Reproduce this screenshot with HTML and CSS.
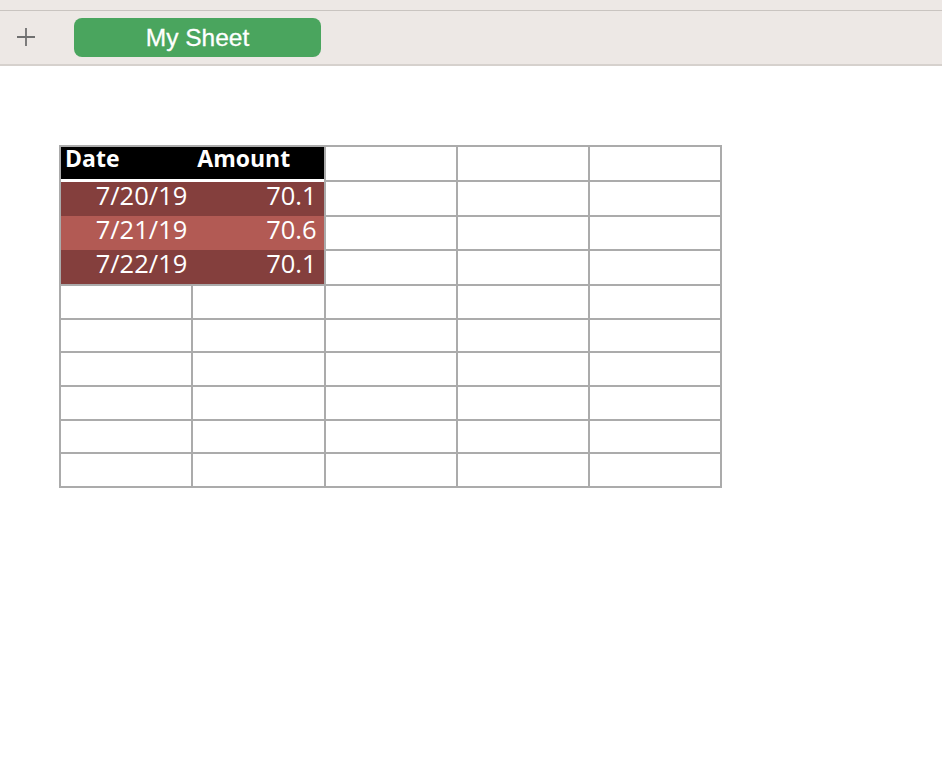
FILE: index.html
```html
<!DOCTYPE html>
<html>
<head>
<meta charset="utf-8">
<link rel="stylesheet" href="styles.css">
</head>
<body>
<div class="topstrip"></div>
<div class="tabbar">
  <button class="add" aria-label="Add sheet">
    <svg width="20" height="20" viewBox="0 0 20 20"><path d="M10 1V19M1 10H19" stroke="#707070" stroke-width="1.8" fill="none"/></svg>
  </button>
  <div class="tab">My Sheet</div>
</div>
<main class="canvas">
  <div class="grid">
    <div class="block">
      <div class="hrow"><span class="c1">Date</span><span class="c2">Amount</span></div>
      <div class="sep"></div>
      <div class="drow dark"><span class="c1 r">7/20/19</span><span class="c2 r">70.1</span></div>
      <div class="drow light"><span class="c1 r">7/21/19</span><span class="c2 r">70.6</span></div>
      <div class="drow dark"><span class="c1 r">7/22/19</span><span class="c2 r">70.1</span></div>
    </div>
    <div class="cell"></div><div class="cell"></div><div class="cell"></div>
    <div class="cell"></div><div class="cell"></div><div class="cell"></div>
    <div class="cell"></div><div class="cell"></div><div class="cell"></div>
    <div class="cell"></div><div class="cell"></div><div class="cell"></div>
    <div class="cell"></div><div class="cell"></div><div class="cell"></div><div class="cell"></div><div class="cell"></div>
    <div class="cell"></div><div class="cell"></div><div class="cell"></div><div class="cell"></div><div class="cell"></div>
    <div class="cell"></div><div class="cell"></div><div class="cell"></div><div class="cell"></div><div class="cell"></div>
    <div class="cell"></div><div class="cell"></div><div class="cell"></div><div class="cell"></div><div class="cell"></div>
    <div class="cell"></div><div class="cell"></div><div class="cell"></div><div class="cell"></div><div class="cell"></div>
    <div class="cell"></div><div class="cell"></div><div class="cell"></div><div class="cell"></div><div class="cell"></div>
  </div>
</main>
</body>
</html>
```

FILE: styles.css
```css
html, body {
  margin: 0;
  padding: 0;
  background: #ffffff;
}
body {
  width: 942px;
  height: 768px;
  overflow: hidden;
  font-family: "Open Sans", "Liberation Sans", sans-serif;
}
.topstrip {
  height: 10px;
  background: #ede8e5;
  border-bottom: 1px solid #c9c4c0;
}
.tabbar {
  height: 53px;
  background: #ede8e5;
  border-bottom: 2px solid #d6d1cd;
  display: flex;
  align-items: flex-start;
}
.add {
  width: 20px;
  height: 20px;
  margin: 16px 0 0 16px;
  padding: 0;
  border: 0;
  background: none;
  display: flex;
}
.tab {
  margin: 7px 0 0 38px;
  width: 247px;
  height: 39px;
  border-radius: 8px;
  background: #4aa55e;
  color: #ffffff;
  font-family: "Liberation Sans", Arial, sans-serif;
  font-size: 24.5px;
  line-height: 40px;
  text-align: center;
  -webkit-text-stroke: 0.3px #ffffff;
}
.canvas {
  padding: 79px 0 0 59px;
}
.grid {
  display: grid;
  grid-template-columns: repeat(5, 130.3px);
  grid-template-rows: repeat(4, 32.8px) repeat(6, 31.6px);
  gap: 2px;
  padding: 2px;
  background: #ababab;
  width: max-content;
}
.cell {
  background: #ffffff;
}
.block {
  grid-column: 1 / 3;
  grid-row: 1 / 5;
  background: #ffffff;
  display: flex;
  flex-direction: column;
  color: #ffffff;
}
.hrow {
  height: 32px;
  background: #000000;
  display: flex;
  font-weight: 700;
  font-size: 23px;
  line-height: 22px;
}
.sep {
  height: 3px;
}
.drow {
  flex: 1;
  display: flex;
  font-size: 25.5px;
  line-height: 23px;
  padding-top: 2px;
}
.dark { background: #843f3d; }
.light { background: #b25a54; }
.c1 {
  width: 132.3px;
  padding: 0 6px 0 4px;
  box-sizing: border-box;
}
.c2 {
  flex: 1;
  padding: 0 7px 0 4px;
  box-sizing: border-box;
}
.r { text-align: right; }
```
